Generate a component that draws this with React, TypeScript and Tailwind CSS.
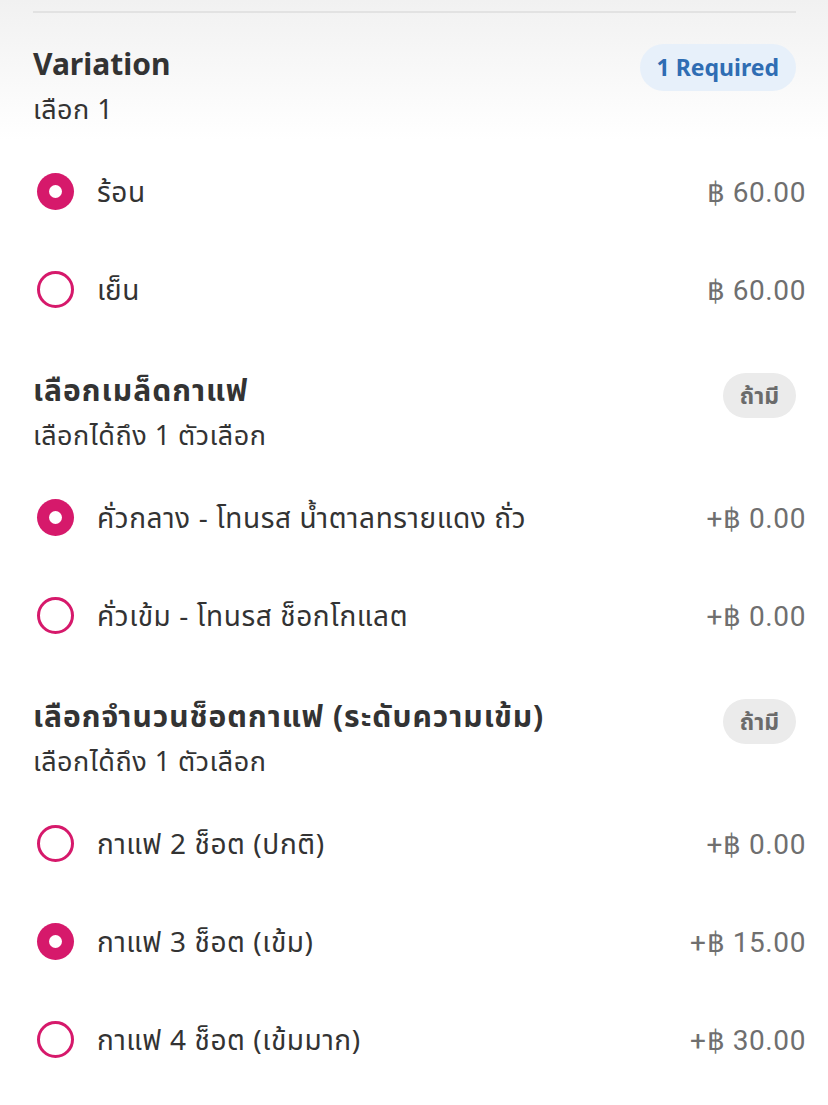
import React from "react";

type Option = { label: string; price: string; selected?: boolean };

const sections: {
  title: string;
  sub: string;
  badge: string;
  required?: boolean;
  options: Option[];
}[] = [
  {
    title: "Variation",
    sub: "เลือก 1",
    badge: "1 Required",
    required: true,
    options: [
      { label: "ร้อน", price: "฿ 60.00", selected: true },
      { label: "เย็น", price: "฿ 60.00" },
    ],
  },
  {
    title: "เลือกเมล็ดกาแฟ",
    sub: "เลือกได้ถึง 1 ตัวเลือก",
    badge: "ถ้ามี",
    options: [
      { label: "คั่วกลาง - โทนรส น้ำตาลทรายแดง ถั่ว", price: "+฿ 0.00", selected: true },
      { label: "คั่วเข้ม - โทนรส ช็อกโกแลต", price: "+฿ 0.00" },
    ],
  },
  {
    title: "เลือกจำนวนช็อตกาแฟ (ระดับความเข้ม)",
    sub: "เลือกได้ถึง 1 ตัวเลือก",
    badge: "ถ้ามี",
    options: [
      { label: "กาแฟ 2 ช็อต (ปกติ)", price: "+฿ 0.00" },
      { label: "กาแฟ 3 ช็อต (เข้ม)", price: "+฿ 15.00", selected: true },
      { label: "กาแฟ 4 ช็อต (เข้มมาก)", price: "+฿ 30.00" },
    ],
  },
];

function Radio({ on }: { on?: boolean }) {
  if (on) {
    return (
      <div className="w-[37px] h-[37px] rounded-full bg-[#d6196b] flex items-center justify-center shrink-0">
        <div className="w-[13px] h-[13px] rounded-full bg-white" />
      </div>
    );
  }
  return (
    <div className="w-[37px] h-[37px] rounded-full border-[3px] border-[#d6196b] bg-white shrink-0" />
  );
}

export default function App() {
  return (
    <div
      className="w-[828px] min-h-[1105px] bg-[linear-gradient(to_bottom,#f1f1f1,#ffffff_140px)] pl-[33px] pr-[22px] pt-[11px] text-[#333333]"
      style={{ fontFamily: '"Noto Sans", "Noto Sans Thai", Roboto, sans-serif' }}
    >
      <div className="h-[2px] bg-[#e2e2e2] mr-[10px]" />

      <div className="flex flex-col gap-[30px] pt-[29px]">
        {sections.map((s) => (
          <section key={s.title}>
            {/* Header */}
            <div className="flex items-start justify-between pr-[10px]">
              <div>
                <h2
                  className={`text-[30px] leading-[44px] font-bold text-[#333333] ${
                    s.required ? "" : "tracking-[1px]"
                  }`}
                >
                  {s.title}
                </h2>
                <p className="text-[27px] leading-[45px] tracking-[0.5px] text-[#333333]">
                  {s.sub}
                </p>
              </div>
              {s.required ? (
                <span className="mt-[2px] h-[47px] px-[17px] rounded-full bg-[#e7f0fa] text-[#2f6db3] text-[23px] font-bold flex items-center">
                  {s.badge}
                </span>
              ) : (
                <span className="mt-[5px] h-[45px] px-[17px] rounded-full bg-[#ebebeb] text-[#6b6b6b] text-[23px] font-bold flex items-center">
                  {s.badge}
                </span>
              )}
            </div>

            {/* Options */}
            <div className="mt-[11px]">
              {s.options.map((o) => (
                <div key={o.label} className="h-[98px] flex items-center pl-[4px]">
                  <Radio on={o.selected} />
                  <span className="ml-[23px] text-[28px] tracking-[0.6px] text-[#333333] flex-1">
                    {o.label}
                  </span>
                  <span
                    className="pt-[3px] text-[28px] tracking-[0.6px] text-[#6f6f6f]"
                    style={{ fontFamily: 'Roboto, "Noto Sans", sans-serif' }}
                  >
                    {o.price}
                  </span>
                </div>
              ))}
            </div>
          </section>
        ))}
      </div>
    </div>
  );
}
